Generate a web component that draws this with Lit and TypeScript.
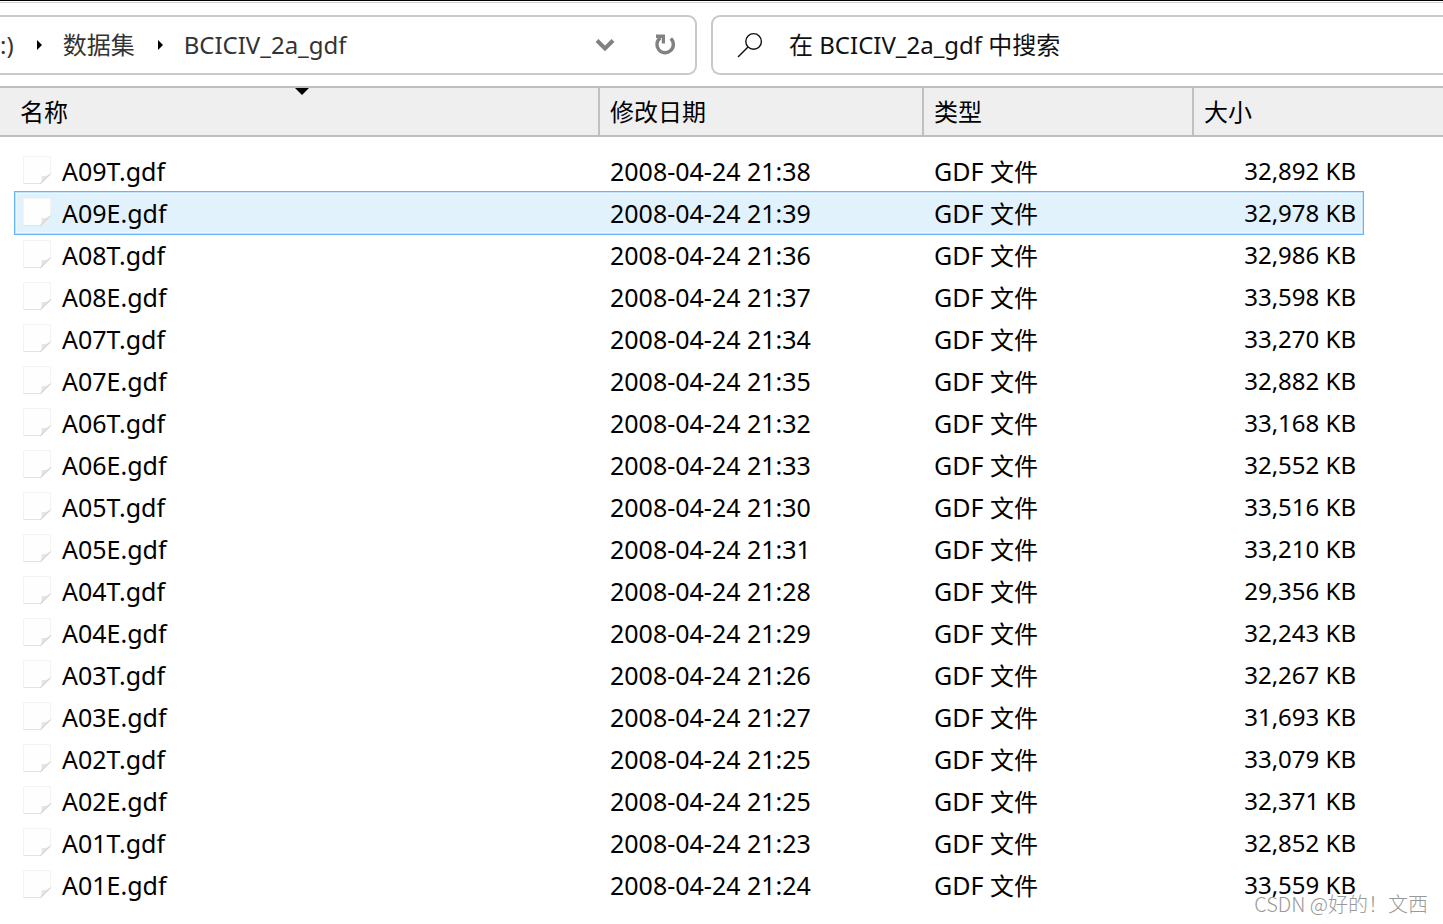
import { LitElement, html, css } from "lit";
import { customElement, state } from "lit/decorators.js";

interface FileEntry {
  name: string;
  time: string;
  size: string;
}

const FILES: FileEntry[] = [
  { name: "A09T.gdf", time: "21:38", size: "32,892" },
  { name: "A09E.gdf", time: "21:39", size: "32,978" },
  { name: "A08T.gdf", time: "21:36", size: "32,986" },
  { name: "A08E.gdf", time: "21:37", size: "33,598" },
  { name: "A07T.gdf", time: "21:34", size: "33,270" },
  { name: "A07E.gdf", time: "21:35", size: "32,882" },
  { name: "A06T.gdf", time: "21:32", size: "33,168" },
  { name: "A06E.gdf", time: "21:33", size: "32,552" },
  { name: "A05T.gdf", time: "21:30", size: "33,516" },
  { name: "A05E.gdf", time: "21:31", size: "33,210" },
  { name: "A04T.gdf", time: "21:28", size: "29,356" },
  { name: "A04E.gdf", time: "21:29", size: "32,243" },
  { name: "A03T.gdf", time: "21:26", size: "32,267" },
  { name: "A03E.gdf", time: "21:27", size: "31,693" },
  { name: "A02T.gdf", time: "21:25", size: "33,079" },
  { name: "A02E.gdf", time: "21:25", size: "32,371" },
  { name: "A01T.gdf", time: "21:23", size: "32,852" },
  { name: "A01E.gdf", time: "21:24", size: "33,559" },
];

@customElement("address-bar")
export class AddressBar extends LitElement {
  static styles = css`
    :host {
      display: grid;
      grid-template-columns: minmax(0, 697fr) minmax(0, 732fr);
      gap: 14px;
      padding: 12px 0 11px;
      font-size: 24px;
      line-height: 32px;
    }
    .box {
      display: flex;
      align-items: center;
      box-sizing: border-box;
      height: 60px;
      border: 2px solid #c9c9c9;
      background: #fff;
    }
    .path {
      border-left: 0;
      border-radius: 0 9px 9px 0;
      padding-right: 16px;
      color: #333;
    }
    .search {
      border-right: 0;
      border-radius: 9px 0 0 9px;
      padding-left: 23px;
      gap: 25px;
    }
    .crumbs {
      display: flex;
      flex: 1;
      align-items: center;
      min-width: 0;
      white-space: nowrap;
    }
    a {
      color: inherit;
      text-decoration: none;
    }
    .sep {
      flex: none;
      width: 5px;
      height: 10px;
      margin: 0 21px 0 23px;
    }
    .tools {
      display: flex;
      gap: 32px;
    }
    button {
      display: grid;
      place-items: center;
      width: 28px;
      height: 28px;
      padding: 0;
      border: 0;
      background: none;
    }
    .glass {
      flex: none;
    }
    input {
      flex: 1;
      min-width: 0;
      padding: 0;
      border: 0;
      outline: 0;
      background: none;
      font: inherit;
      color: #111;
    }
    input::placeholder {
      color: #111;
      opacity: 1;
    }
  `;

  private sep() {
    return html`<svg class="sep" viewBox="0 0 5 10" aria-hidden="true"><path d="M0 0L5 5L0 10Z" fill="#000" /></svg>`;
  }

  render() {
    return html`
      <div class="box path">
        <nav class="crumbs" aria-label="路径">
          <a href="#drive">:)</a>${this.sep()}<a href="#data">数据集</a>${this.sep()}<a href="#gdf">BCICIV_2a_gdf</a>
        </nav>
        <div class="tools">
          <button type="button" aria-label="历史">
            <svg width="20" height="14" viewBox="0 0 20 14">
              <path d="M2 2.5L10 10.5L18 2.5" fill="none" stroke="#818181" stroke-width="4" />
            </svg>
          </button>
          <button type="button" aria-label="刷新">
            <svg width="22" height="24" viewBox="0 0 22 24">
              <path d="M16.8 5.6A8.2 8.2 0 1 1 6.3 4.9" fill="none" stroke="#818181" stroke-width="3.4" />
              <path d="M2 1.5H11V10.5H7.8V5H2Z" fill="#818181" />
            </svg>
          </button>
        </div>
      </div>
      <div class="box search">
        <svg class="glass" width="28" height="28" viewBox="0 0 28 28" aria-hidden="true">
          <path d="M2 26L12 16" fill="none" stroke="#111" stroke-width="1.4" />
          <circle cx="17.6" cy="10.4" r="7.8" fill="none" stroke="#111" stroke-width="1.4" />
        </svg>
        <input type="text" aria-label="搜索" placeholder="在 BCICIV_2a_gdf 中搜索" />
      </div>
    `;
  }
}

@customElement("file-list")
export class FileList extends LitElement {
  static styles = css`
    :host {
      display: block;
      font-size: 25px;
      line-height: 32px;
      color: #000;
    }
    table,
    thead,
    tbody {
      display: block;
    }
    tr {
      display: grid;
      grid-template-columns: minmax(180px, 1fr) 324px 270px 169px;
      align-items: center;
    }
    th,
    td {
      padding: 0;
      font-weight: inherit;
      text-align: left;
      white-space: nowrap;
    }
    thead {
      padding-right: 80px;
      border-top: 2px solid #bdbdbd;
      border-bottom: 2px solid #bdbdbd;
      background: #efefef;
    }
    th {
      position: relative;
      box-sizing: border-box;
      border-right: 2px solid #c0c0c0;
    }
    th:last-child {
      border-right: 0;
    }
    th button {
      display: block;
      width: 100%;
      height: 47px;
      padding: 0 10px;
      border: 0;
      background: none;
      font: inherit;
      font-size: 24px;
      color: inherit;
      text-align: left;
    }
    th:first-child button {
      padding-left: 20px;
    }
    .arrow {
      position: absolute;
      top: 0;
      left: calc(50% - 4px);
      width: 14px;
      height: 7px;
    }
    tbody {
      padding: 13px 80px 18px 15px;
    }
    tbody tr {
      height: 42px;
    }
    .selected {
      background: #e2f2fd;
      box-shadow: 0 0 0 1px #66b3f8, inset 0 0 0 1px #c3e2fc, inset 0 0 0 2px #edf7fe;
    }
    td {
      padding: 0 10px;
    }
    td:last-child {
      padding-right: 7px;
      font-size: 24px;
      text-align: right;
    }
    .name {
      display: flex;
      align-items: center;
      gap: 10px;
      padding-left: 7px;
    }
    .hanzi {
      font-size: 24px;
    }
  `;

  @state() private selected = 1;

  render() {
    return html`
      <table>
        <thead>
          <tr>
            <th scope="col" aria-sort="descending">
              <button type="button">名称</button>
              <svg class="arrow" viewBox="0 0 14 7" aria-hidden="true"><path d="M0 0H14L7 7Z" /></svg>
            </th>
            <th scope="col"><button type="button">修改日期</button></th>
            <th scope="col"><button type="button">类型</button></th>
            <th scope="col"><button type="button">大小</button></th>
          </tr>
        </thead>
        <tbody>
          ${FILES.map(
            (f, i) => html`
              <tr class=${i === this.selected ? "selected" : ""} @click=${() => (this.selected = i)}>
                <td class="name">
                  <svg width="30" height="30" viewBox="0 1 30 30" aria-hidden="true">
                    <path d="M1.5 1.5H28.5V19L19 28.5H1.5Z" fill="#fefefe" stroke="#f3f3f3" />
                    <path d="M1.5 28.5H19" stroke="#e2e2e2" />
                    <path d="M18.5 28.5C20 25.5 20 23 19.5 21C23 21.5 26 20.5 28.5 18.5Z" fill="#e4e4e4" />
                    <path d="M18.5 28.8L28.8 18.5" stroke="#c8c8c8" />
                  </svg>
                  <span>${f.name}</span>
                </td>
                <td>2008-04-24 ${f.time}</td>
                <td>GDF <span class="hanzi">文件</span></td>
                <td>${f.size} KB</td>
              </tr>
            `
          )}
        </tbody>
      </table>
    `;
  }
}

@customElement("app-root")
export class AppRoot extends LitElement {
  static styles = css`
    :host {
      display: block;
      position: relative;
      box-sizing: border-box;
      min-height: 100vh;
      border-top: 1px solid #000;
      background: #fff;
      font-family: "Noto Sans", "Noto Sans CJK SC", sans-serif;
      overflow: hidden;
    }
    .edge {
      height: 1px;
      margin-top: 1px;
      background: #d0d0d0;
    }
    .mark {
      position: absolute;
      right: 15px;
      bottom: 6px;
      font-family: "Noto Sans CJK SC", sans-serif;
      font-size: 20px;
      font-weight: 300;
      line-height: 28px;
      color: #999;
      pointer-events: none;
    }
  `;

  render() {
    return html`
      <div class="edge"></div>
      <address-bar></address-bar>
      <file-list></file-list>
      <div class="mark">CSDN @好的！文西</div>
    `;
  }
}
